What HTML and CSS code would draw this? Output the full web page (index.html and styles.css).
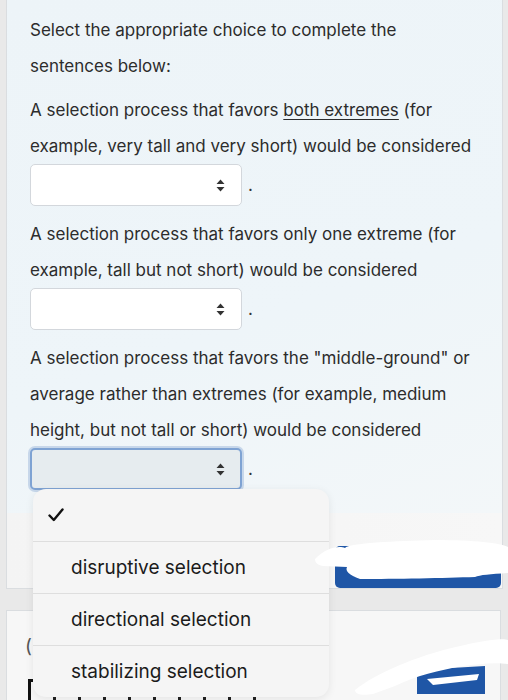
FILE: index.html
```html
<!DOCTYPE html>
<html>
<head>
<meta charset="utf-8">
<link rel="stylesheet" href="styles.css">
</head>
<body>
<div class="page">
  <div class="card">
    <div class="question">
      <p class="txt">Select the appropriate choice to complete the sentences below:</p>
      <p class="txt">A selection process that favors <span class="ul">both extremes</span> (for example, very tall and very short) would be considered</p>
      <div class="blank"><div class="sel"><span class="arrows"><svg width="9" height="13" viewBox="0 0 9 13"><path d="M4.5 0.5 L8.5 5 L0.5 5 Z M4.5 12.5 L8.5 8 L0.5 8 Z" fill="#333"/></svg></span></div><span class="dot">.</span></div>
      <p class="txt">A selection process that favors only one extreme (for example, tall but not short) would be considered</p>
      <div class="blank"><div class="sel"><span class="arrows"><svg width="9" height="13" viewBox="0 0 9 13"><path d="M4.5 0.5 L8.5 5 L0.5 5 Z M4.5 12.5 L8.5 8 L0.5 8 Z" fill="#333"/></svg></span></div><span class="dot">.</span></div>
      <p class="txt">A selection process that favors the "middle-ground" or average rather than extremes (for example, medium height, but not tall or short) would be considered</p>
      <div class="blank"><div class="sel focus"><span class="arrows"><svg width="9" height="13" viewBox="0 0 9 13"><path d="M4.5 0.5 L8.5 5 L0.5 5 Z M4.5 12.5 L8.5 8 L0.5 8 Z" fill="#333"/></svg></span></div><span class="dot">.</span></div>
    </div>
    <div class="foot"></div>
  </div>
  <div class="card2">
    <span class="paren">(</span>
    <div class="row2">
      <span class="bracket"></span>
      <div class="ticks"><i></i><i></i><i></i><i></i><i></i><i></i><i></i><i></i><i></i></div>
    </div>
  </div>

  <div class="menu">
    <div class="opt check"><svg width="16" height="14" viewBox="0 0 16 14"><path d="M1.5 7.5 L5.8 12 L14.5 1.5" fill="none" stroke="#111" stroke-width="2.4" stroke-linecap="round" stroke-linejoin="round"/></svg></div>
    <div class="opt">disruptive selection</div>
    <div class="opt">directional selection</div>
    <div class="opt">stabilizing selection</div>
  </div>

  <svg class="scribble1" width="193" height="60" viewBox="0 0 193 60">
    <rect x="20" y="7" width="166" height="42" rx="5" fill="#1f56a6"/>
    <path d="M0 20 C10 9, 24 6, 30 9 C34 4, 80 2, 120 1 C160 1, 185 4, 193 8 L193 34 C175 35, 165 36, 160 38 C130 39, 80 40, 45 40 C34 36, 30 32, 32 28 L8 27 C2 26, 0 23, 0 20 Z" fill="#ffffff"/>
  </svg>
  <svg class="scribble2" width="153" height="70" viewBox="0 0 153 70">
    <path d="M62 38 L130 34 L130 62 L62 62 Z" fill="#1f56a6"/>
    <path d="M0 58 C20 42, 60 24, 105 14 C130 8, 148 6, 153 8 L153 32 C140 30, 122 32, 108 34 C85 38, 60 44, 40 54 L18 62 C6 64, 0 62, 0 58 Z" fill="#ffffff"/>
    <path d="M72 47 L124 42 L122 48 L78 53 Z" fill="#ffffff"/>
  </svg>
</div>
</body>
</html>
```

FILE: styles.css
```css
html, body {
  margin: 0;
  padding: 0;
}
body {
  background: #e9e9e9;
  font-family: Inter, "Liberation Sans", Arial, sans-serif;
  width: 508px;
  height: 700px;
  overflow: hidden;
}
.page {
  position: relative;
  width: 508px;
  height: 700px;
}
.card {
  margin-left: 6px;
  width: 495px;
  border: 1px solid #dadde0;
  border-top: none;
  background: #f5f5f5;
}
.question {
  background: linear-gradient(160deg, #edf4f8 0%, #eef5f9 60%, #f3f7f9 100%);
  padding: 12px 20px 24px 23px;
  height: 513px;
  box-sizing: border-box;
}
.txt {
  margin: 0 0 8px 0;
  font-size: 17px;
  line-height: 36px;
  color: #2c2c2c;
}
.ul {
  text-decoration: underline;
  text-decoration-thickness: 1px;
  text-underline-offset: 3px;
}
.blank {
  display: flex;
  align-items: center;
  margin: -8px 0 10px 0;
}
.sel {
  width: 212px;
  height: 42px;
  box-sizing: border-box;
  border: 1px solid #d3d7dc;
  border-radius: 5px;
  background: #ffffff;
  display: flex;
  align-items: center;
  justify-content: flex-end;
  padding-right: 16px;
}
.sel.focus {
  border: 2px solid #7fa3d3;
  background: #e6ecef;
  box-shadow: 0 0 0 2px #c7d7ea;
  padding-right: 15px;
}
.arrows {
  display: flex;
}
.dot {
  font-size: 17px;
  color: #333;
  margin-left: 6px;
  line-height: 20px;
}
.foot {
  height: 75px;
  background: linear-gradient(90deg, #f4f4f4, #f7f7f7);
}
.card2 {
  margin-top: 21px;
  margin-left: 6px;
  width: 495px;
  height: 100px;
  border: 1px solid #dadde0;
  background: #f7f7f7;
  position: relative;
  box-sizing: border-box;
  padding: 24px 0 0 18px;
}
.paren {
  display: block;
  font-size: 19px;
  line-height: 24px;
  color: #555;
}
.row2 {
  display: flex;
  align-items: flex-start;
  margin-top: 20px;
  gap: 20px;
}
.bracket {
  display: block;
  width: 5px;
  height: 40px;
  border-left: 3px solid #111;
  border-top: 3px solid #111;
  box-sizing: border-box;
  margin-left: 3px;
}
.ticks {
  display: flex;
  gap: 22px;
  margin-top: 16px;
}
.ticks i {
  display: block;
  width: 3px;
  height: 8px;
  background: #222;
}
.menu {
  position: absolute;
  left: 33px;
  top: 489px;
  width: 296px;
  background: #f5f5f5;
  border-radius: 13px;
  box-shadow: 0 2px 8px rgba(0,0,0,0.08);
  overflow: hidden;
}
.opt {
  height: 51px;
  border-top: 1px solid #dedede;
  display: flex;
  align-items: center;
  padding-left: 38px;
  font-size: 19px;
  color: #1b1b1b;
}
.opt.check {
  border-top: none;
  height: 52px;
  padding-left: 15px;
}
.scribble1 {
  position: absolute;
  left: 315px;
  top: 539px;
}
.scribble2 {
  position: absolute;
  left: 355px;
  top: 632px;
}
```
